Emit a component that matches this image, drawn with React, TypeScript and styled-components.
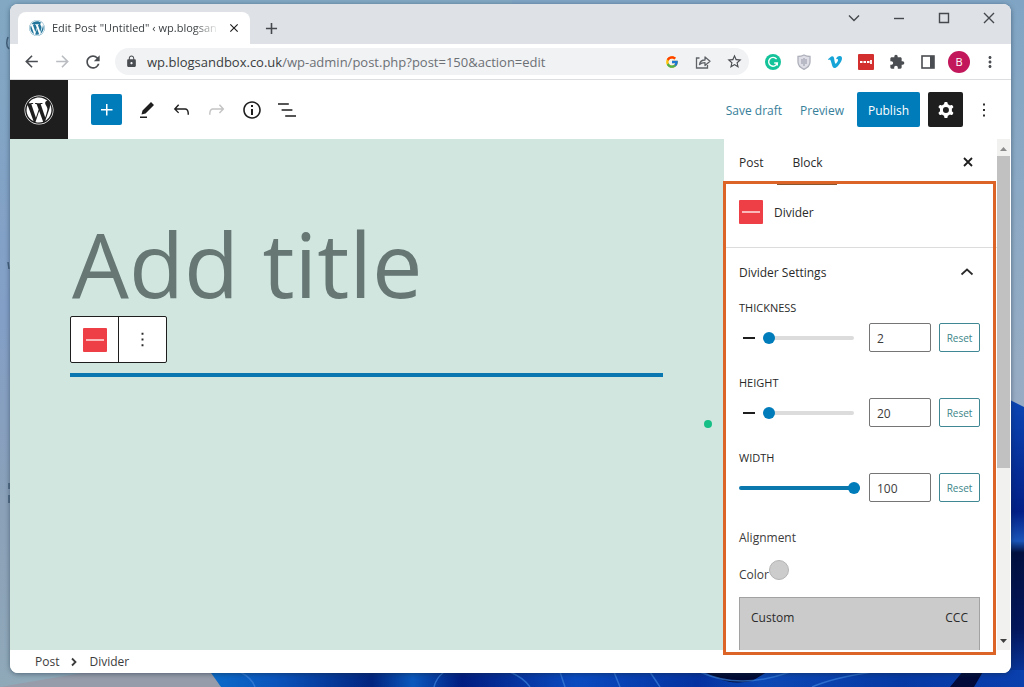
import React, { useState } from "react";
import styled, { createGlobalStyle } from "styled-components";
import { FaWordpress, FaVimeoV } from "react-icons/fa";
import { FcGoogle } from "react-icons/fc";
import {
  MdArrowBack,
  MdArrowForward,
  MdRefresh,
  MdLock,
  MdStarBorder,
  MdExtension,
  MdMoreVert,
  MdClose,
  MdAdd,
} from "react-icons/md";

const blue = "#007cba";
const ink = "#1e1e1e";

const GlobalStyle = createGlobalStyle`
  *, *::before, *::after { box-sizing: border-box; }
  body {
    margin: 0;
    font-family: "Open Sans", "Noto Sans", sans-serif;
    font-size: 12px;
    line-height: 16px;
    color: #2a2a2a;
  }
  button, input {
    font: inherit;
    color: inherit;
    margin: 0;
  }
  svg { display: block; flex: none; }
`;

const Desktop = styled.div`
  position: relative;
  display: flex;
  height: 100vh;
  min-height: 480px;
  padding: 4px 13px 14px 10px;
  background: #8aa9c1;
  overflow: hidden;
`;

const WallpaperArt = styled.svg`
  position: absolute;
  inset: 0;
  width: 100%;
  height: 100%;
`;

const Window = styled.main`
  position: relative;
  flex: 1;
  min-width: 0;
  display: flex;
  flex-direction: column;
  background: #fff;
  border-radius: 8px;
  box-shadow: 0 1px 5px rgba(20, 40, 60, 0.5);
`;

const TabStrip = styled.div`
  display: flex;
  align-items: flex-end;
  height: 40px;
  padding-left: 8px;
  background: #dee1e6;
  border-radius: 8px 8px 0 0;
`;

const BrowserTab = styled.div`
  display: flex;
  align-items: center;
  width: 232px;
  height: 32px;
  padding: 0 8px 0 11px;
  gap: 7px;
  background: #fff;
  border-radius: 8px 8px 0 0;
`;

const TabTitle = styled.span`
  flex: 1;
  overflow: hidden;
  white-space: nowrap;
  font-size: 11px;
  color: #3c4043;
  mask-image: linear-gradient(to right, #000 85%, transparent);
`;

const PlainButton = styled.button<{ $size?: number; $color?: string }>`
  display: flex;
  align-items: center;
  justify-content: center;
  flex: none;
  width: ${(p) => p.$size ?? 24}px;
  height: ${(p) => p.$size ?? 24}px;
  padding: 0;
  border: 0;
  background: none;
  color: ${(p) => p.$color ?? ink};
`;

const NewTab = styled(PlainButton)`
  margin: 0 auto 4px 9px;
`;

const WindowControls = styled.div`
  display: flex;
  align-self: flex-start;
  gap: 21px;
  padding: 2px 10px 0 0;
`;

const AddressRow = styled.div`
  display: flex;
  align-items: center;
  height: 36px;
  padding: 0 9px;
  border-bottom: 1px solid #dcdee0;
`;

const NavButtons = styled.div`
  display: flex;
  gap: 7px;
  padding-right: 10px;
`;

const AddressBar = styled.div`
  flex: 1;
  min-width: 0;
  display: flex;
  align-items: center;
  height: 27px;
  padding: 0 3px 0 10px;
  background: #f1f2f4;
  border-radius: 14px;
`;

const Url = styled.span`
  flex: 1;
  min-width: 0;
  overflow: hidden;
  white-space: nowrap;
  padding-left: 9px;
  font-size: 13px;
  line-height: 20px;
  color: #6c7074;
  b { font-weight: 400; color: #3a3d40; }
`;

const BarActions = styled.div`
  display: flex;
  gap: 7px;
`;

const Extensions = styled.div`
  display: flex;
  gap: 7px;
  padding-left: 12px;
`;

const Avatar = styled.button`
  width: 22px;
  height: 22px;
  margin: 1px;
  padding: 0;
  border: 0;
  border-radius: 50%;
  background: #c2185b;
  color: #fff;
  font-size: 11px;
`;

const EditorHeader = styled.header`
  display: flex;
  align-items: center;
  height: 59px;
  padding-right: 15px;
`;

const SiteLogo = styled.a`
  display: flex;
  align-items: center;
  justify-content: center;
  width: 58px;
  height: 59px;
  background: ${ink};
  color: #fff;
`;

const EditorTools = styled.div`
  display: flex;
  align-items: center;
  margin: 0 auto 0 23px;
`;

const Inserter = styled(PlainButton)`
  width: 31px;
  height: 31px;
  margin-right: 7px;
  border-radius: 2px;
  background: ${blue};
  color: #fff;
`;

const EditorActions = styled.div`
  display: flex;
  align-items: center;
`;

const TextButton = styled.button`
  padding: 2px 0 0;
  margin-right: 18px;
  border: 0;
  background: none;
  color: #37809a;
  line-height: 20px;
`;

const Publish = styled.button`
  height: 35px;
  margin: 0 8px 0 -5px;
  padding: 2px 11px 0;
  border: 0;
  border-radius: 2px;
  background: ${blue};
  color: #fff;
`;

const SettingsToggle = styled(PlainButton)`
  margin-right: 9px;
  border-radius: 2px;
  background: ${ink};
  color: #fff;
`;

const EditorBody = styled.div`
  flex: 1;
  min-height: 0;
  display: flex;
`;

const Canvas = styled.section`
  position: relative;
  flex: 1;
  min-width: 0;
  padding: 78px 61px 0 60px;
  background: #d1e6df;
`;

const TitleInput = styled.input`
  display: block;
  width: 100%;
  height: 92px;
  padding: 0 2px;
  border: 0;
  outline: 0;
  background: none;
  font-size: 90px;
  line-height: 92px;
  &::placeholder { color: #667774; opacity: 1; }
`;

const BlockToolbar = styled.div`
  display: flex;
  width: 97px;
  height: 47px;
  margin: 7px 0 10px;
  border: 1px solid ${ink};
  border-radius: 2px;
  background: #fff;
`;

const ToolbarCell = styled.button`
  flex: 1;
  display: flex;
  align-items: center;
  justify-content: center;
  padding: 0;
  border: 0;
  background: none;
  & + & { border-left: 1px solid ${ink}; }
`;

const DividerBlock = styled.hr`
  height: 4px;
  margin: 0;
  border: 0;
  background: #0a77b0;
`;

const StatusDot = styled.span`
  position: absolute;
  right: 12px;
  top: 281px;
  width: 8px;
  height: 8px;
  border-radius: 50%;
  background: #15bf86;
`;

const Sidebar = styled.aside`
  position: relative;
  display: flex;
  width: 287px;
  padding-right: 1px;
  background: #fff;
`;

const Highlight = styled.div`
  position: absolute;
  inset: 42px 15px -5px -1px;
  border: 3px solid #dc6426;
  pointer-events: none;
`;

const Panel = styled.div`
  flex: 1;
  min-width: 0;
  overflow: hidden;
`;

const TabsRow = styled.div`
  display: flex;
  align-items: stretch;
  height: 46px;
  padding-right: 17px;
`;

const PanelTab = styled.button<{ $active?: boolean }>`
  padding: 5px 14px 0 15px;
  border: 0;
  border-bottom: 3px solid ${(p) => (p.$active ? "#8a5630" : "transparent")};
  background: none;
  font-weight: 500;
`;

const ClosePanel = styled(PlainButton)`
  margin: 11px 0 0 auto;
`;

const BlockCard = styled.div`
  display: flex;
  align-items: center;
  gap: 11px;
  height: 63px;
  padding: 0 15px 8px;
  border-bottom: 1px solid #dcdcdc;
`;

const CardTitle = styled.h2`
  margin: 0;
  padding-top: 2px;
  font-size: 12px;
  font-weight: 500;
`;

const PanelToggle = styled.button`
  display: flex;
  align-items: center;
  justify-content: space-between;
  width: 100%;
  height: 49px;
  padding: 0 23px 0 15px;
  border: 0;
  background: none;
  font-weight: 500;
`;

const Fields = styled.div`
  padding: 3px 17px 0 15px;
`;

const Field = styled.div`
  height: 75px;
`;

const FieldLabel = styled.label`
  display: block;
  font-size: 11px;
  line-height: 16px;
  text-transform: uppercase;
`;

const FieldRow = styled.div`
  display: flex;
  align-items: center;
  height: 29px;
  margin-top: 7px;
`;

const SliderSlot = styled.div<{ $full: boolean }>`
  flex: 1;
  min-width: 0;
  display: flex;
  align-items: center;
  padding: ${(p) => (p.$full ? "0 9px 0 0" : "0 15px 0 4px")};
  gap: 8px;
`;

const Minus = styled.span`
  width: 12px;
  height: 2px;
  background: ${ink};
`;

const Slider = styled.input<{ $full: boolean }>`
  appearance: none;
  flex: 1;
  min-width: 0;
  height: 16px;
  background: none;
  &::-webkit-slider-runnable-track {
    height: 4px;
    border-radius: 2px;
    background: ${(p) => (p.$full ? "#0a77ad" : "#dcdcdc")};
  }
  &::-webkit-slider-thumb {
    appearance: none;
    width: 12px;
    height: 12px;
    margin-top: -4px;
    border-radius: 50%;
    background: ${blue};
  }
`;

const NumberBox = styled.input`
  width: 62px;
  height: 29px;
  padding: 2px 7px 0;
  border: 1px solid #757575;
  border-radius: 2px;
  background: #fff;
  color: #3c3c3c;
`;

const Reset = styled.button`
  width: 41px;
  height: 29px;
  margin-left: 8px;
  padding: 0;
  border: 1px solid #3f8793;
  border-radius: 2px;
  background: #fff;
  color: #3c8589;
  font-size: 10px;
`;

const PlainLabel = styled.div`
  display: flex;
  align-items: flex-end;
  height: 21px;
  margin-bottom: 16px;
  color: #3c3c3c;
`;

const Swatch = styled.button`
  width: 20px;
  height: 20px;
  margin-bottom: 3px;
  padding: 0;
  border: 1px solid #b4b4b4;
  border-radius: 50%;
  background: #ccc;
`;

const ColorCard = styled.div`
  display: flex;
  justify-content: space-between;
  height: 90px;
  margin-top: -2px;
  padding: 12px 11px;
  border: 1px solid #a2a2a2;
  background: #cbcbcb;
  font-weight: 500;
`;

const ScrollTrack = styled.div`
  display: flex;
  flex-direction: column;
  width: 13px;
  background: #f1f1f0;
`;

const ScrollThumb = styled.div`
  height: 61%;
  margin-bottom: auto;
  background: #c1c1c1;
`;

const ScrollArrow = styled.svg`
  width: 13px;
  height: 17px;
`;

const Footer = styled.footer`
  display: flex;
  align-items: center;
  height: 23px;
  padding-left: 25px;
  gap: 8px;
  border-radius: 0 0 8px 8px;
  background: #fff;
  color: #3c3c3c;
`;

const editorPaths = {
  plus: "M11 12.5V17.5H12.5V12.5H17.5V11H12.5V6H11V11H6V12.5H11Z",
  pencil: "m19 7-3-3-8.5 8.5-1 4 4-1L19 7Zm-7 11.5H5V20h7v-1.5Z",
  undo: "M18.3 11.7c-.6-.6-1.4-.9-2.3-.9H6.7l2.9-3.3-1.1-1-4.5 5L8.5 16l1-1-2.7-2.7H16c.5 0 .9.2 1.3.5 1 1 1 3.4 1 4.5v.3h1.5v-.2c0-1.5 0-4.3-1.5-5.7z",
  redo: "M15.6 6.5l-1.1 1 2.9 3.3H8c-.9 0-1.7.3-2.3.9-1.4 1.5-1.4 4.2-1.4 5.6v.2h1.5v-.3c0-1.1 0-3.5 1-4.5.3-.3.7-.5 1.3-.5h9.2L14.5 15l1.1 1.1 4.6-4.6-4.6-5z",
  info: "M12 3.2c-4.8 0-8.8 3.9-8.8 8.8 0 4.8 3.9 8.8 8.8 8.8 4.8 0 8.8-3.9 8.8-8.8 0-4.8-4-8.8-8.8-8.8zm0 16c-4 0-7.2-3.3-7.2-7.2C4.8 8 8 4.8 12 4.8s7.2 3.3 7.2 7.2c0 4-3.2 7.2-7.2 7.2zM11 17h2v-6h-2v6zm0-8h2V7h-2v2z",
  list: "M13.8 5.2H3v1.5h10.8V5.2zm-3.6 12v1.5H21v-1.5H10.2zm7.2-6H6.6v1.5h10.8v-1.5z",
  cog: "M10.289 4.836A1 1 0 0111.275 4h1.306a1 1 0 01.987.836l.244 1.466c.787.26 1.503.679 2.108 1.218l1.393-.522a1 1 0 011.216.437l.653 1.13a1 1 0 01-.23 1.273l-1.148.944a6.025 6.025 0 010 2.435l1.149.946a1 1 0 01.23 1.272l-.653 1.13a1 1 0 01-1.216.437l-1.394-.522c-.605.54-1.32.958-2.108 1.218l-.244 1.466a1 1 0 01-.987.836h-1.306a1 1 0 01-.986-.836l-.244-1.466a5.995 5.995 0 01-2.108-1.218l-1.394.522a1 1 0 01-1.217-.436l-.653-1.131a1 1 0 01.23-1.272l1.149-.946a6.026 6.026 0 010-2.435l-1.148-.944a1 1 0 01-.23-1.272l.653-1.131a1 1 0 011.217-.437l1.393.522a5.994 5.994 0 012.108-1.218l.244-1.466zM14.929 12a3 3 0 11-6 0 3 3 0 016 0z",
  more: "M13 19h-2v-2h2v2zm0-6h-2v-2h2v2zm0-6h-2V5h2v2z",
};

function EditorIcon({ name, size = 24 }: { name: keyof typeof editorPaths; size?: number }) {
  return (
    <svg width={size} height={size} viewBox="0 0 24 24" fill="currentColor" fillRule="evenodd" aria-hidden="true">
      <path d={editorPaths[name]} />
    </svg>
  );
}

function LineIcon({ d, size = 14, width = 1.4 }: { d: string; size?: number; width?: number }) {
  return (
    <svg width={size} height={size} viewBox="0 0 14 14" fill="none" stroke="currentColor" strokeWidth={width} aria-hidden="true">
      <path d={d} />
    </svg>
  );
}

function DividerIcon() {
  return (
    <svg width="24" height="24" viewBox="0 0 24 24" aria-hidden="true">
      <rect width="24" height="24" rx="1" fill="#ee3f46" />
      <path d="M3 12h18" stroke="#ffd9d6" strokeWidth="1.6" />
    </svg>
  );
}

function GrammarlyIcon() {
  return (
    <svg width="16" height="16" viewBox="0 0 16 16" fill="none" aria-hidden="true">
      <circle cx="8" cy="8" r="8" fill="#15c39a" />
      <path d="M11.6 5.2A4.4 4.4 0 1 0 12.3 9H9.2M12.3 9v2.6" stroke="#fff" strokeWidth="1.4" />
    </svg>
  );
}

function ShieldIcon() {
  return (
    <svg width="14" height="16" viewBox="0 0 14 16" fill="none" aria-hidden="true">
      <path d="M7 1c2 1.1 4 1.5 6 1.5V8c0 3.6-3 6-6 7.3C4 14 1 11.6 1 8V2.5C3 2.5 5 2.1 7 1z" fill="#dedfe6" stroke="#aeb0bb" strokeWidth="1.3" />
      <path d="M7 4v8M5 5v5M9 5v5" stroke="#9fa2b1" strokeWidth="1.2" />
    </svg>
  );
}

function RedBadgeIcon() {
  return (
    <svg width="16" height="16" viewBox="0 0 16 16" aria-hidden="true">
      <rect width="16" height="16" rx="1" fill="#d32f2f" />
      <path d="M2 8h2.5M5.5 8H8M9 8h2.5M13 6v4" stroke="#fff" strokeWidth="1.8" />
    </svg>
  );
}

function ShareIcon() {
  return (
    <svg width="16" height="16" viewBox="0 0 16 16" fill="none" stroke="#5f6368" strokeWidth="1.3" aria-hidden="true">
      <path d="M4.5 4H1.5v10h11v-3" />
      <path d="M4.5 10.5C5 7.5 7 6 10 6V3l5 4.3-5 4.2V8.7c-2.5 0-4.2.5-5.5 1.8z" strokeLinejoin="round" />
    </svg>
  );
}

function SidePanelIcon() {
  return (
    <svg width="14" height="14" viewBox="0 0 14 14" aria-hidden="true">
      <rect x="1" y="1" width="12" height="12" fill="none" stroke="#4a4d51" strokeWidth="1.6" />
      <path d="M9 1h4v12H9z" fill="#4a4d51" />
    </svg>
  );
}

function Wallpaper() {
  return (
    <WallpaperArt viewBox="0 0 1024 687" preserveAspectRatio="none" aria-hidden="true">
      <defs>
        <linearGradient id="sky" x1="0" y1="0" x2="0" y2="1">
          <stop offset="0" stopColor="#82a8c3" />
          <stop offset="0.45" stopColor="#839fc7" />
          <stop offset="0.75" stopColor="#8ba1b8" />
          <stop offset="1" stopColor="#90a9b9" />
        </linearGradient>
        <linearGradient id="east" x1="0" y1="0" x2="0" y2="1">
          <stop offset="0" stopColor="#80a5c4" />
          <stop offset="1" stopColor="#99adc4" />
        </linearGradient>
        <linearGradient id="petal" x1="0" y1="0" x2="0" y2="1">
          <stop offset="0" stopColor="#0b47b5" />
          <stop offset="0.4" stopColor="#021f86" />
          <stop offset="0.5" stopColor="#1a55b8" />
          <stop offset="0.54" stopColor="#01103f" />
          <stop offset="0.8" stopColor="#03165c" />
          <stop offset="1" stopColor="#0a3fae" />
        </linearGradient>
        <linearGradient id="floor" x1="0" y1="0" x2="1" y2="0">
          <stop offset="0" stopColor="#0c6cc8" />
          <stop offset="0.08" stopColor="#0a55bd" />
          <stop offset="0.2" stopColor="#02257f" />
          <stop offset="0.25" stopColor="#0a58bd" />
          <stop offset="0.31" stopColor="#021d80" />
          <stop offset="0.45" stopColor="#0a4bc0" />
          <stop offset="0.6" stopColor="#0532a0" />
          <stop offset="0.68" stopColor="#0c48b5" />
          <stop offset="0.85" stopColor="#0639a4" />
          <stop offset="1" stopColor="#0a3fae" />
        </linearGradient>
      </defs>
      <rect width="1024" height="687" fill="url(#sky)" />
      <rect x="512" width="512" height="420" fill="url(#east)" />
      <path d="M100 670h120v17H0z" fill="#969ca9" />
      <path d="M1000 395l24 12v280h-24z" fill="url(#petal)" />
      <path d="M209 670h815v17H221z" fill="url(#floor)" />
      <path d="M700 670h70l-18 11q-20 4-35-3z" fill="#020b35" />
      <path d="M950 687l14-17h20l-10 17z" fill="#020b3a" />
      <g fill="none" stroke="#3a80d8" strokeWidth="1.5" opacity="0.7">
        <path d="M240 672q12 6 15 15M434 687q2-9 10-15M510 672q14 6 20 15M560 672l5 15M614 672l6 15M650 672l10 15M700 672q40 18 90 0M812 687q20-9 60-15" />
      </g>
      <path d="M8 37q-3 8 1 12M8 262l1 7M9 483v6M9 495v8" stroke="#45607b" strokeWidth="1.5" fill="none" />
    </WallpaperArt>
  );
}

function RangeField({ id, label, initial }: { id: string; label: string; initial: number }) {
  const full = initial === 100;
  const [value, setValue] = useState(initial);
  const min = full ? 0 : initial;
  const update = (e: React.ChangeEvent<HTMLInputElement>) => setValue(Number(e.target.value));
  return (
    <Field>
      <FieldLabel htmlFor={id}>{label}</FieldLabel>
      <FieldRow>
        <SliderSlot $full={full}>
          {!full && <Minus />}
          <Slider $full={full} id={id} type="range" min={min} max={full ? 100 : 400} value={value} onChange={update} />
        </SliderSlot>
        <NumberBox aria-label={`${label} value`} inputMode="numeric" value={value} onChange={update} />
        <Reset type="button" onClick={() => setValue(initial)}>Reset</Reset>
      </FieldRow>
    </Field>
  );
}

const controlGrey = "#45484c";

export default function App() {
  return (
    <>
      <GlobalStyle />
      <Desktop>
        <Wallpaper />
        <Window>
          <TabStrip>
            <BrowserTab>
              <FaWordpress size={16} color="#21759b" />
              <TabTitle>Edit Post "Untitled" ‹ wp.blogsan</TabTitle>
              <PlainButton $size={16} aria-label="Close tab"><MdClose size={14} /></PlainButton>
            </BrowserTab>
            <NewTab $color={controlGrey} aria-label="New tab"><MdAdd size={19} /></NewTab>
            <WindowControls>
              <PlainButton $color={controlGrey} aria-label="Search tabs"><LineIcon d="M2 4.5l5 5 5-5" /></PlainButton>
              <PlainButton $color={controlGrey} aria-label="Minimize"><LineIcon d="M2 7.5h10" /></PlainButton>
              <PlainButton $color={controlGrey} aria-label="Maximize"><LineIcon d="M2.5 2.5h9v9h-9z" /></PlainButton>
              <PlainButton $color={controlGrey} aria-label="Close"><LineIcon d="M2 2l10 10M12 2L2 12" /></PlainButton>
            </WindowControls>
          </TabStrip>

          <AddressRow>
            <NavButtons>
              <PlainButton $color="#4a4d51" aria-label="Back"><MdArrowBack size={19} /></PlainButton>
              <PlainButton $color="#b9bcc0" aria-label="Forward"><MdArrowForward size={19} /></PlainButton>
              <PlainButton $color="#4a4d51" aria-label="Reload"><MdRefresh size={20} /></PlainButton>
            </NavButtons>
            <AddressBar>
              <MdLock size={13} color="#4a4d51" />
              <Url><b>wp.blogsandbox.co.uk</b>/wp-admin/post.php?post=150&amp;action=edit</Url>
              <BarActions>
                <PlainButton aria-label="Google"><FcGoogle size={14} /></PlainButton>
                <PlainButton aria-label="Share"><ShareIcon /></PlainButton>
                <PlainButton $color="#4a4d51" aria-label="Bookmark"><MdStarBorder size={17} /></PlainButton>
              </BarActions>
            </AddressBar>
            <Extensions>
              <PlainButton aria-label="Grammarly"><GrammarlyIcon /></PlainButton>
              <PlainButton aria-label="Shield"><ShieldIcon /></PlainButton>
              <PlainButton $color="#17a5d8" aria-label="Vimeo"><FaVimeoV size={16} /></PlainButton>
              <PlainButton aria-label="Notes"><RedBadgeIcon /></PlainButton>
              <PlainButton $color="#4a4d51" aria-label="Extensions"><MdExtension size={16} /></PlainButton>
              <PlainButton aria-label="Side panel"><SidePanelIcon /></PlainButton>
              <Avatar type="button">B</Avatar>
              <PlainButton $color="#4a4d51" aria-label="Browser menu"><MdMoreVert size={18} /></PlainButton>
            </Extensions>
          </AddressRow>

          <EditorHeader>
            <SiteLogo href="#" aria-label="View posts"><FaWordpress size={30} /></SiteLogo>
            <EditorTools>
              <Inserter aria-label="Add block"><EditorIcon name="plus" /></Inserter>
              <PlainButton $size={35} aria-label="Tools"><EditorIcon name="pencil" /></PlainButton>
              <PlainButton $size={35} aria-label="Undo"><EditorIcon name="undo" size={23} /></PlainButton>
              <PlainButton $size={35} $color="#c4c4c4" aria-label="Redo"><EditorIcon name="redo" size={23} /></PlainButton>
              <PlainButton $size={35} aria-label="Details"><EditorIcon name="info" /></PlainButton>
              <PlainButton $size={35} aria-label="List view"><EditorIcon name="list" /></PlainButton>
            </EditorTools>
            <EditorActions>
              <TextButton type="button">Save draft</TextButton>
              <TextButton type="button">Preview</TextButton>
              <Publish type="button">Publish</Publish>
              <SettingsToggle $size={35} aria-label="Settings"><EditorIcon name="cog" /></SettingsToggle>
              <PlainButton aria-label="Options"><EditorIcon name="more" size={22} /></PlainButton>
            </EditorActions>
          </EditorHeader>

          <EditorBody>
            <Canvas>
              <TitleInput placeholder="Add title" aria-label="Add title" />
              <BlockToolbar>
                <ToolbarCell aria-label="Divider"><DividerIcon /></ToolbarCell>
                <ToolbarCell aria-label="Block options"><EditorIcon name="more" size={23} /></ToolbarCell>
              </BlockToolbar>
              <DividerBlock />
              <StatusDot />
            </Canvas>

            <Sidebar>
              <Panel>
                <TabsRow>
                  <PanelTab type="button">Post</PanelTab>
                  <PanelTab type="button" $active>Block</PanelTab>
                  <ClosePanel aria-label="Close settings"><LineIcon d="M3 3l8 8M11 3l-8 8" width={1.8} /></ClosePanel>
                </TabsRow>
                <BlockCard>
                  <DividerIcon />
                  <CardTitle>Divider</CardTitle>
                </BlockCard>
                <PanelToggle type="button">
                  Divider Settings
                  <LineIcon d="M1.5 8.500L7 3.500l5.500 5" width={1.7} />
                </PanelToggle>
                <Fields>
                  <RangeField id="thickness" label="Thickness" initial={2} />
                  <RangeField id="height" label="Height" initial={20} />
                  <RangeField id="width" label="Width" initial={100} />
                  <PlainLabel>Alignment</PlainLabel>
                  <PlainLabel>Color<Swatch aria-label="Pick color" /></PlainLabel>
                  <ColorCard><span>Custom</span><span>CCC</span></ColorCard>
                </Fields>
              </Panel>
              <ScrollTrack>
                <ScrollArrow viewBox="0 0 13 17"><path d="M3 12l3.500-4L10 12z" fill="#8b8b8b" /></ScrollArrow>
                <ScrollThumb />
                <ScrollArrow viewBox="0 0 13 17"><path d="M3 6l3.500 4L10 6z" fill="#404040" /></ScrollArrow>
              </ScrollTrack>
              <Highlight />
            </Sidebar>
          </EditorBody>

          <Footer>
            <span>Post</span>
            <LineIcon d="M5 3.500l3.500 3.500L5 10.500" width={1.8} />
            <span>Divider</span>
          </Footer>
        </Window>
      </Desktop>
    </>
  );
}
